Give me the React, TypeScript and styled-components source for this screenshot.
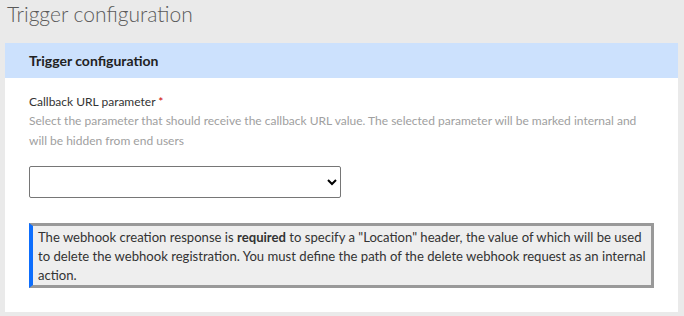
import * as React from 'react'
import styled, { createGlobalStyle } from 'styled-components'

const GlobalStyle = createGlobalStyle`
  html, body {
    margin: 0;
    padding: 0;
    background: #eaeaea;
  }
  body {
    font-family: Lato, 'Open Sans', sans-serif;
    color: #333;
  }
`

const Page = styled.div`
  display: flex;
  flex-direction: column;
  padding: 0 6px 5px 5px;
`

const PageTitle = styled.h1`
  margin: 0;
  height: 43px;
  padding: 1px 0 0 2px;
  box-sizing: border-box;
  font-size: 21px;
  font-weight: 300;
  color: #5a5a5a;
  line-height: 26px;
`

const Panel = styled.section`
  background: #fff;
  display: flex;
  flex-direction: column;
`

const PanelHeader = styled.header`
  height: 35px;
  background: #cce1fd;
  display: flex;
  align-items: center;
  padding: 0 24px;
  font-size: 14px;
  font-weight: 700;
  color: #222;
`

const PanelBody = styled.div`
  display: flex;
  flex-direction: column;
  padding: 15px 24px 24px;
`

const Label = styled.label`
  font-size: 12px;
  line-height: 18px;
  color: #333;
`

const Required = styled.span`
  color: #c00;
`

const Hint = styled.p`
  margin: 0;
  font-size: 12px;
  line-height: 20px;
  color: #a0a0a0;
`

const Select = styled.select`
  margin-top: 15px;
  width: 312px;
  height: 32px;
  border: 1px solid #767676;
  border-radius: 2px;
  background: #fff;
  font-size: 13px;
`

const Notice = styled.div`
  margin-top: 25px;
  border: 3px solid #999;
  border-left: 4px solid #0d6efd;
  background: #eee;
  padding: 2px 4px 0 5px;
  font-size: 13.1px;
  line-height: 19px;
  color: #333;
`

export default function App() {
  return (
    <Page>
      <GlobalStyle />
      <PageTitle>Trigger configuration</PageTitle>
      <Panel>
        <PanelHeader>Trigger configuration</PanelHeader>
        <PanelBody>
          <Label>
            Callback URL parameter <Required>*</Required>
          </Label>
          <Hint>
            Select the parameter that should receive the callback URL value. The selected parameter will be marked
            internal and will be hidden from end users
          </Hint>
          <Select>
            <option></option>
          </Select>
          <Notice>
            The webhook creation response is <b>required</b> to specify a "Location" header, the value of which will
            be used to delete the webhook registration. You must define the path of the delete webhook request as an
            internal action.
          </Notice>
        </PanelBody>
      </Panel>
    </Page>
  )
}
